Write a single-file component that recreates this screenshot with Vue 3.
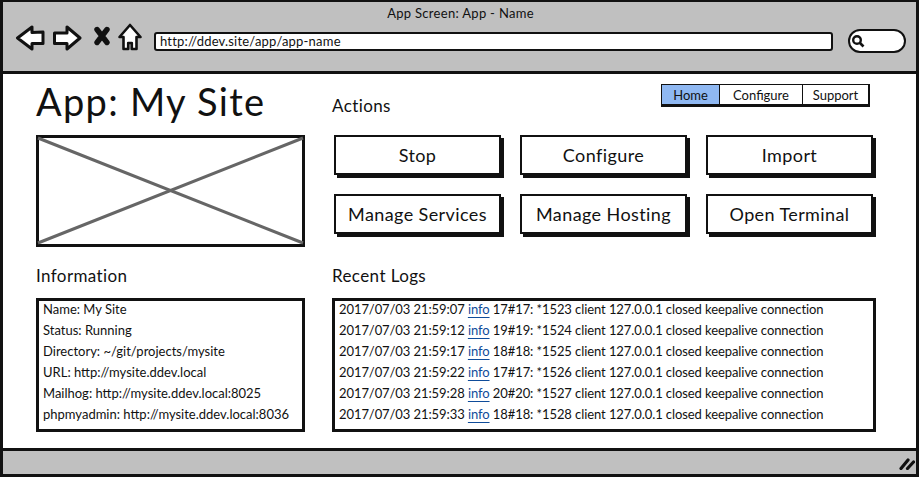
<script setup>
const buttons = ['Stop', 'Configure', 'Import', 'Manage Services', 'Manage Hosting', 'Open Terminal']
const info = [
  'Name: My Site',
  'Status: Running',
  'Directory: ~/git/projects/mysite',
  'URL: http://mysite.ddev.local',
  'Mailhog: http://mysite.ddev.local:8025',
  'phpmyadmin: http://mysite.ddev.local:8036',
]
const logs = [
  ['2017/07/03 21:59:07', '17#17: *1523'],
  ['2017/07/03 21:59:12', '19#19: *1524'],
  ['2017/07/03 21:59:17', '18#18: *1525'],
  ['2017/07/03 21:59:22', '17#17: *1526'],
  ['2017/07/03 21:59:28', '20#20: *1527'],
  ['2017/07/03 21:59:33', '18#18: *1528'],
]
</script>

<template>
  <div class="window">
    <header class="chrome">
      <div class="title">App Screen: App - Name</div>
      <div class="toolbar">
        <svg class="ico back" width="30" height="26" viewBox="0 0 30 26"><path d="M2.5 13 L17 2 L17 7.5 L28 7 L28 18.5 L17 18.5 L17 24 Z" fill="#fff" stroke="#111" stroke-width="3" stroke-linejoin="round"/></svg>
        <svg class="ico fwd" width="30" height="26" viewBox="0 0 30 26"><path d="M28 13 L15 2 L15 8 L2.5 8 L2.5 18.5 L15 18.5 L15 24 Z" fill="#fff" stroke="#111" stroke-width="3" stroke-linejoin="round"/></svg>
        <svg class="ico stop" width="18" height="20" viewBox="0 0 18 20"><path d="M4 3.5 L14 16.5 M14 3.5 L4 16.5" stroke="#111" stroke-width="5.4" stroke-linecap="round"/></svg>
        <svg class="ico home" width="24" height="28" viewBox="0 0 24 28"><path d="M12 2 L22.5 14 L18.5 14 L18.5 26 L13.8 26 L13.8 20 L10.2 20 L10.2 26 L5.5 26 L5.5 14 L1.5 14 Z" fill="#fff" stroke="#111" stroke-width="2.6" stroke-linejoin="round"/></svg>
        <div class="url">http://ddev.site/app/app-name</div>
        <div class="search">
          <svg width="14" height="14" viewBox="0 0 14 14"><circle cx="6" cy="6" r="3.8" fill="none" stroke="#111" stroke-width="2.4"/><path d="M9 9 L12.5 12.5" stroke="#111" stroke-width="2.6"/></svg>
        </div>
      </div>
    </header>

    <main class="main">
      <section class="left">
        <h1>App: My Site</h1>
        <svg class="placeholder" viewBox="0 0 269 112" preserveAspectRatio="none">
          <rect x="1.5" y="1.5" width="266" height="109" fill="#fff" stroke="#111" stroke-width="3"/>
          <path d="M2 108 L267 3 M2 3 L267 108" stroke="#666" stroke-width="3" fill="none"/>
        </svg>
        <h2 class="info-head">Information</h2>
        <div class="panel info">
          <div v-for="line in info" :key="line" class="row">{{ line }}</div>
        </div>
      </section>

      <section class="right">
        <div class="top">
          <h2 class="actions">Actions</h2>
          <nav class="tabs">
            <span class="tab active">Home</span>
            <span class="tab">Configure</span>
            <span class="tab">Support</span>
          </nav>
        </div>
        <div class="buttons">
          <button v-for="b in buttons" :key="b" class="btn">{{ b }}</button>
        </div>
        <h2 class="logs-head">Recent Logs</h2>
        <div class="panel logs">
          <div v-for="l in logs" :key="l[0]" class="row">{{ l[0] }} <a class="link">info</a> {{ l[1] }} client 127.0.0.1 closed keepalive connection</div>
        </div>
      </section>
    </main>

    <footer class="status">
      <svg width="18" height="14" viewBox="0 0 18 14"><path d="M4 12.5 L11 4 M10.5 12.5 L16.5 6" stroke="#111" stroke-width="3.2" stroke-linecap="round"/></svg>
    </footer>
  </div>
</template>

<style>
html, body { margin: 0; background: #fff; }
</style>

<style scoped>
.window {
  width: 919px;
  height: 477px;
  box-sizing: border-box;
  border: 3px solid #111;
  border-top-width: 2px;
  display: flex;
  flex-direction: column;
  font-family: Lato, "Open Sans", sans-serif;
  color: #111;
  overflow: hidden;
  background: #fff;
}
.chrome {
  height: 72px;
  flex: none;
  box-sizing: border-box;
  background: #c0c0c0;
  border-bottom: 3px solid #111;
}
.title {
  font-size: 13px;
  line-height: 16px;
  padding-top: 3px;
  text-align: center;
  letter-spacing: 0.3px;
  margin-left: 2px;
}
.toolbar {
  display: flex;
  align-items: flex-start;
  padding-left: 12px;
}
.ico { flex: none; display: block; }
.back { margin-top: 4px; }
.fwd { margin-left: 7px; margin-top: 4px; }
.stop { margin-left: 11px; margin-top: 5px; }
.home { margin-left: 7px; margin-top: 2px; }
.url {
  flex: none;
  margin-left: 12px;
  margin-top: 11px;
  width: 679px;
  height: 19px;
  box-sizing: border-box;
  border: 2px solid #111;
  border-radius: 3px;
  background: #fff;
  font-size: 13px;
  line-height: 15px;
  padding-left: 4px;
  letter-spacing: 0.2px;
}
.search {
  flex: none;
  margin-left: 15px;
  margin-top: 8px;
  width: 58px;
  height: 24px;
  box-sizing: border-box;
  border: 2.5px solid #111;
  border-radius: 12px;
  background: #fff;
  display: flex;
  align-items: center;
  padding-left: 1px;
}
.main {
  flex: 1;
  display: flex;
  gap: 27px;
  padding-left: 33px;
  min-height: 0;
}
.left { width: 269px; flex: none; }
.right { width: 544px; flex: none; }
h1 {
  margin: 0;
  font-size: 38px;
  font-weight: 400;
  line-height: 44px;
  padding-top: 5px;
  letter-spacing: 1.3px;
}
h2 {
  margin: 0;
  font-size: 17px;
  font-weight: 400;
  letter-spacing: 0.4px;
  line-height: 22px;
}
.placeholder {
  display: block;
  width: 269px;
  height: 112px;
  margin-top: 12px;
}
.info-head { margin-top: 18px; }
.panel {
  margin-top: 11px;
  height: 134px;
  box-sizing: border-box;
  border: 3px solid #111;
  font-size: 13px;
  padding: 0 4px;
  white-space: nowrap;
  background: #fff;
}
.row { height: 21px; line-height: 17px; }
.logs .row { letter-spacing: -0.08px; }
.top {
  display: flex;
  justify-content: space-between;
  padding-top: 10px;
  padding-right: 6px;
  height: 61px;
  box-sizing: border-box;
}
.actions { margin-top: 11px; }
.tabs {
  display: flex;
  height: 23px;
  box-sizing: border-box;
  border: 2px solid #111;
  border-width: 1px 2px 3px 1px;
  font-size: 13px;
  line-height: 20px;
}
.tab {
  text-align: center;
  border-left: 1px solid #111;
  box-sizing: border-box;
}
.tab:first-child { border-left: 0; }
.active { background: #8fb8f2; width: 57px; }
.tab:nth-child(2) { width: 83px; }
.tab:nth-child(3) { width: 66px; }
.buttons {
  display: grid;
  grid-template-columns: repeat(3, 167px);
  grid-auto-rows: 40px;
  column-gap: 19px;
  row-gap: 19px;
  padding-left: 2px;
}
.btn {
  appearance: none;
  margin: 0;
  padding: 0;
  background: #fff;
  border: 2px solid #111;
  box-shadow: 3px 3px 0 #111;
  font: inherit;
  font-size: 18px;
  letter-spacing: 0.4px;
  color: #111;
}
.logs-head { margin-top: 31px; }
.link {
  color: #0f4c9a;
  text-decoration: underline;
  text-underline-offset: 3px;
}
.status {
  height: 26px;
  flex: none;
  box-sizing: border-box;
  background: #c0c0c0;
  border-top: 3px solid #111;
  display: flex;
  justify-content: flex-end;
  align-items: center;
  padding-right: 1px;
}
</style>
